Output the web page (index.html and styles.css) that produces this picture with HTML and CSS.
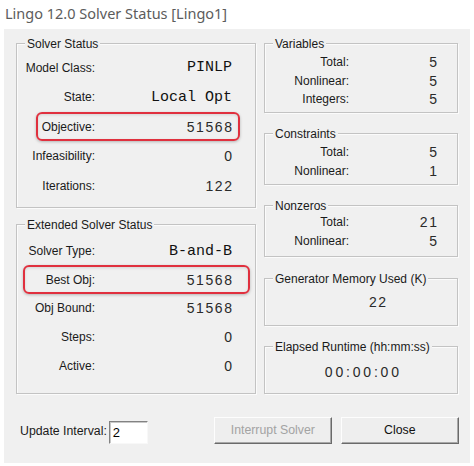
FILE: index.html
```html
<!DOCTYPE html>
<html>
<head>
<meta charset="utf-8">
<link rel="stylesheet" href="styles.css">
</head>
<body>
<div class="title">Lingo 12.0 Solver Status [Lingo1]</div>
<div class="dialog">
  <div class="main">
    <div class="col">
      <div class="group g-solver">
        <div class="legend">Solver Status</div>
        <div class="rows big">
          <div class="row"><span class="lbl">Model Class:</span><span class="val mono">PINLP</span></div>
          <div class="row"><span class="lbl">State:</span><span class="val mono">Local Opt</span></div>
          <div class="row hl hl-obj"><span class="lbl">Objective:</span><span class="val num">51568</span></div>
          <div class="row"><span class="lbl">Infeasibility:</span><span class="val num">0</span></div>
          <div class="row"><span class="lbl">Iterations:</span><span class="val num">122</span></div>
        </div>
      </div>
      <div class="group g-ext">
        <div class="legend">Extended Solver Status</div>
        <div class="rows big ext">
          <div class="row"><span class="lbl">Solver Type:</span><span class="val mono">B-and-B</span></div>
          <div class="row hl hl-best"><span class="lbl">Best Obj:</span><span class="val num">51568</span></div>
          <div class="row"><span class="lbl">Obj Bound:</span><span class="val num">51568</span></div>
          <div class="row"><span class="lbl">Steps:</span><span class="val num">0</span></div>
          <div class="row"><span class="lbl">Active:</span><span class="val num">0</span></div>
        </div>
      </div>
    </div>
    <div class="col">
      <div class="group g-vars">
        <div class="legend">Variables</div>
        <div class="rows small">
          <div class="row"><span class="lbl">Total:</span><span class="val num">5</span></div>
          <div class="row"><span class="lbl">Nonlinear:</span><span class="val num">5</span></div>
          <div class="row"><span class="lbl">Integers:</span><span class="val num">5</span></div>
        </div>
      </div>
      <div class="group g-cons">
        <div class="legend">Constraints</div>
        <div class="rows small">
          <div class="row"><span class="lbl">Total:</span><span class="val num">5</span></div>
          <div class="row"><span class="lbl">Nonlinear:</span><span class="val num">1</span></div>
        </div>
      </div>
      <div class="group g-nz">
        <div class="legend">Nonzeros</div>
        <div class="rows small tight">
          <div class="row"><span class="lbl">Total:</span><span class="val num">21</span></div>
          <div class="row"><span class="lbl">Nonlinear:</span><span class="val num">5</span></div>
        </div>
      </div>
      <div class="group g-mem">
        <div class="legend">Generator Memory Used (K)</div>
        <div class="single mem num">22</div>
      </div>
      <div class="group g-time">
        <div class="legend">Elapsed Runtime (hh:mm:ss)</div>
        <div class="single time num">00:00:00</div>
      </div>
    </div>
  </div>
  <div class="footer">
    <span class="upd">Update Interval:</span>
    <span class="input">2</span>
    <button class="btn disabled" type="button">Interrupt Solver</button>
    <button class="btn close" type="button">Close</button>
  </div>
</div>
</body>
</html>
```

FILE: styles.css
```css
* { box-sizing: border-box; }
html, body { margin: 0; padding: 0; background: #fff; }
body {
  width: 474px;
  height: 466px;
  font-family: "Liberation Sans", Arial, sans-serif;
  font-size: 12px;
  color: #1a1a1a;
  overflow: hidden;
}
.title {
  height: 29px;
  padding: 4px 0 0 5px;
  font-family: "Noto Sans", "Open Sans", sans-serif;
  font-size: 14.5px;
  line-height: 18px;
  color: #5c5c5c;
}
.dialog {
  margin-left: 4px;
  width: 466px;
  height: 434px;
  background: #f0f0f0;
  padding: 14px 0 0 12px;
}
.main {
  display: grid;
  grid-template-columns: 240px 194px;
  column-gap: 8px;
}
.col { display: flex; flex-direction: column; }
.group {
  border: 1px solid #c3c3c3;
  box-shadow: inset 1px 1px 0 #fbfbfb, 1px 1px 0 #fbfbfb;
}
.legend {
  margin: -7px 0 0 8px;
  padding: 0 2px;
  height: 14px;
  line-height: 14px;
  width: fit-content;
  background: #f0f0f0;
  color: #1a1a1a;
  white-space: nowrap;
}
.g-solver { height: 165px; }
.g-ext { height: 170px; margin-top: 16px; }
.g-vars { height: 70px; }
.g-cons { height: 52px; margin-top: 20px; }
.g-nz { height: 52px; margin-top: 20px; }
.g-mem { height: 48px; margin-top: 21px; }
.g-time { height: 48px; margin-top: 20px; }

.rows { display: flex; flex-direction: column; }
.row {
  display: grid;
  align-items: center;
}
.rows.big { padding: 2px 23px 0 0; }
.rows.big.ext { padding-top: 5px; }
.rows.big .row {
  grid-template-columns: 78px 1fr;
  height: 29.5px;
}
.rows.big.ext .row { height: 28.6px; }
.rows.small { padding: 2px 20px 0 0; }
.rows.small.tight { padding-top: 0; }
.rows.small .row {
  grid-template-columns: 84px 1fr;
  height: 18.5px;
}
.lbl { text-align: right; white-space: nowrap; }
.val { text-align: right; white-space: nowrap; }
.mono {
  font-family: "Liberation Mono", "Courier New", monospace;
  font-size: 15px;
  color: #111;
}
.num {
  font-family: "Liberation Sans", Arial, sans-serif;
  font-size: 14px;
  letter-spacing: 1.6px;
  margin-right: -1.6px;
  color: #2a2a2a;
}
.rows.small .num { font-size: 14px; }
.single {
  height: 18.5px;
  line-height: 18.5px;
  text-align: center;
}
.mem { margin-top: 7px; padding-left: 33px; }
.time { margin-top: 9px; letter-spacing: 2.8px; padding-left: 3px; }

/* red highlight annotations drawn over rows */
.hl { position: relative; }
.hl::after {
  content: "";
  position: absolute;
  border: 2px solid #e0303e;
  border-radius: 6px;
  box-shadow: 0 1px 3px rgba(0,0,0,0.25), inset 0 1px 3px rgba(0,0,0,0.12);
}
.hl-obj::after { left: 19px; right: -8px; top: 0; bottom: 1px; }
.hl-best::after { left: 6px; right: -18px; top: -1px; bottom: 0; }

.footer {
  display: flex;
  align-items: center;
  margin-top: 23px;
  padding-left: 4px;
  height: 27px;
}
.upd { white-space: nowrap; margin-top: 0; font-size: 12.3px; }
.input {
  margin-left: 2px;
  margin-top: 4px;
  width: 39px;
  height: 23px;
  background: #fff;
  border: 1px solid;
  border-color: #828282 #f8f8f8 #f8f8f8 #828282;
  box-shadow: inset 1px 1px 0 #c8c8c8;
  padding: 2px 0 0 3px;
  font-size: 13px;
  line-height: 17px;
  color: #000;
}
.btn {
  width: 118px;
  height: 27px;
  font-family: "Liberation Sans", Arial, sans-serif;
  font-size: 12.3px;
  background: #eeeeee;
  border: 1px solid;
  border-color: #fdfdfd #6a6a6a #6a6a6a #fdfdfd;
  box-shadow: inset -1px -1px 0 #a8a8a8;
  padding: 0 0 1px 0;
  color: #111;
}
.btn.disabled { margin-left: 66px; color: #a3a3a3; }
.btn.close { margin-left: 9px; }
```
